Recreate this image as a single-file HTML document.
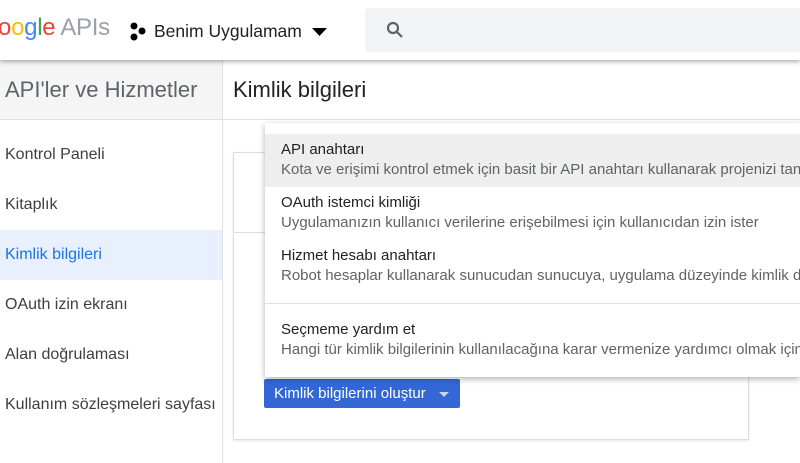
<!DOCTYPE html><html><head><style>
html,body{margin:0;width:800px;height:463px;overflow:hidden}
body{font-family:"Liberation Sans",Arial,sans-serif;background:#fff;position:relative}
.a{position:absolute}
.hdr{left:0;top:0;width:800px;height:60px;background:#fff;box-shadow:0 2px 4px rgba(0,0,0,.3);z-index:3;overflow:hidden}
.side{left:0;top:60px;width:222px;height:403px;border-right:1px solid #e0e0e0;background:#fff}
.stitle{left:0;top:60px;width:222px;height:60px;background:#f5f5f5;border-bottom:1px solid #e0e0e0;font-size:22px;color:#5f6368;line-height:60px;padding-left:5px;box-sizing:border-box}
.it{left:0;width:222px;height:50px;line-height:50px;font-size:16px;color:#3c4043;padding-left:5px;box-sizing:border-box;white-space:nowrap}
.menu{left:265px;top:123px;width:535px;height:254px;background:#fff;box-shadow:0 2px 6px rgba(0,0,0,.3);z-index:5;overflow:hidden}
.mi{position:absolute;left:0;width:535px;padding-left:16px;box-sizing:border-box}
.t1{font-size:15px;color:#202124}.t2{font-size:15px;color:#5f6368;margin-top:3px;white-space:nowrap}
</style></head><body>
<div class="a hdr">
<div class="a" style="left:-2px;top:14px;font-size:24px;letter-spacing:-.3px"><span style="color:#ea4335">o</span><span style="color:#fbbc05">o</span><span style="color:#4285f4">g</span><span style="color:#34a853">l</span><span style="color:#ea4335">e</span> <span style="color:#9aa0a6">APIs</span></div>
<svg class="a" style="left:129px;top:22px" width="20" height="20"><circle cx="5" cy="4" r="3.5"/><circle cx="13" cy="9" r="3.5"/><circle cx="5" cy="15" r="3.5"/></svg>
<div class="a" style="left:154px;top:21px;font-size:17.5px;color:#202124">Benim Uygulamam</div>
<svg class="a" style="left:312px;top:28px" width="16" height="9"><path d="M0 0h15L7.5 8z"/></svg>
<div class="a" style="left:365px;top:8px;width:440px;height:44px;background:#f1f3f4;border-radius:4px"></div>
<svg class="a" style="left:386px;top:21px" width="18" height="18" fill="none" stroke="#5f6368" stroke-width="2.2"><circle cx="7" cy="7" r="5"/><path d="M11 11l5 5"/></svg>
</div>
<div class="a side"></div>
<div class="a stitle">API'ler ve Hizmetler</div>
<div class="a it" style="top:130px">Kontrol Paneli</div>
<div class="a it" style="top:180px">Kitaplık</div>
<div class="a it" style="top:230px;background:#e8f0fe;color:#1a73e8">Kimlik bilgileri</div>
<div class="a it" style="top:280px">OAuth izin ekranı</div>
<div class="a it" style="top:330px">Alan doğrulaması</div>
<div class="a it" style="top:380px">Kullanım sözleşmeleri sayfası</div>
<div class="a" style="left:223px;top:60px;width:577px;height:60px;border-bottom:1px solid #e0e0e0;font-size:22px;color:#202124;line-height:60px;padding-left:10px;box-sizing:border-box">Kimlik bilgileri</div>
<div class="a" style="left:233px;top:152px;width:514px;height:286px;border:1px solid #dadce0;box-shadow:0 1px 2px rgba(0,0,0,.1)"></div>
<div class="a" style="left:234px;top:232px;width:514px;height:1px;background:#dadce0"></div>
<div class="a" style="left:264px;top:379px;width:196px;height:29px;background:#3367d6;border-radius:2px;color:#fff;font-size:15px;line-height:29px;padding-left:10px;box-sizing:border-box;white-space:nowrap">Kimlik bilgilerini oluştur<svg style="position:absolute;left:175px;top:13px" width="10" height="5"><path d="M0 0h10L5 5z" fill="#c6d4f5"/></svg></div>
<div class="a menu">
<div class="mi" style="top:11px;height:53px;background:#eeeeee;padding-top:7px"><div class="t1">API anahtarı</div><div class="t2">Kota ve erişimi kontrol etmek için basit bir API anahtarı kullanarak projenizi tanımlar</div></div>
<div class="mi" style="top:71px"><div class="t1">OAuth istemci kimliği</div><div class="t2">Uygulamanızın kullanıcı verilerine erişebilmesi için kullanıcıdan izin ister</div></div>
<div class="mi" style="top:124px"><div class="t1">Hizmet hesabı anahtarı</div><div class="t2">Robot hesaplar kullanarak sunucudan sunucuya, uygulama düzeyinde kimlik doğrulamayı etkinleştirir</div></div>
<div style="position:absolute;left:0;top:180px;width:535px;height:1px;background:#e0e0e0"></div>
<div class="mi" style="top:198px"><div class="t1">Seçmeme yardım et</div><div class="t2">Hangi tür kimlik bilgilerinin kullanılacağına karar vermenize yardımcı olmak için birkaç soru sorar</div></div>
</div>
</body></html>
